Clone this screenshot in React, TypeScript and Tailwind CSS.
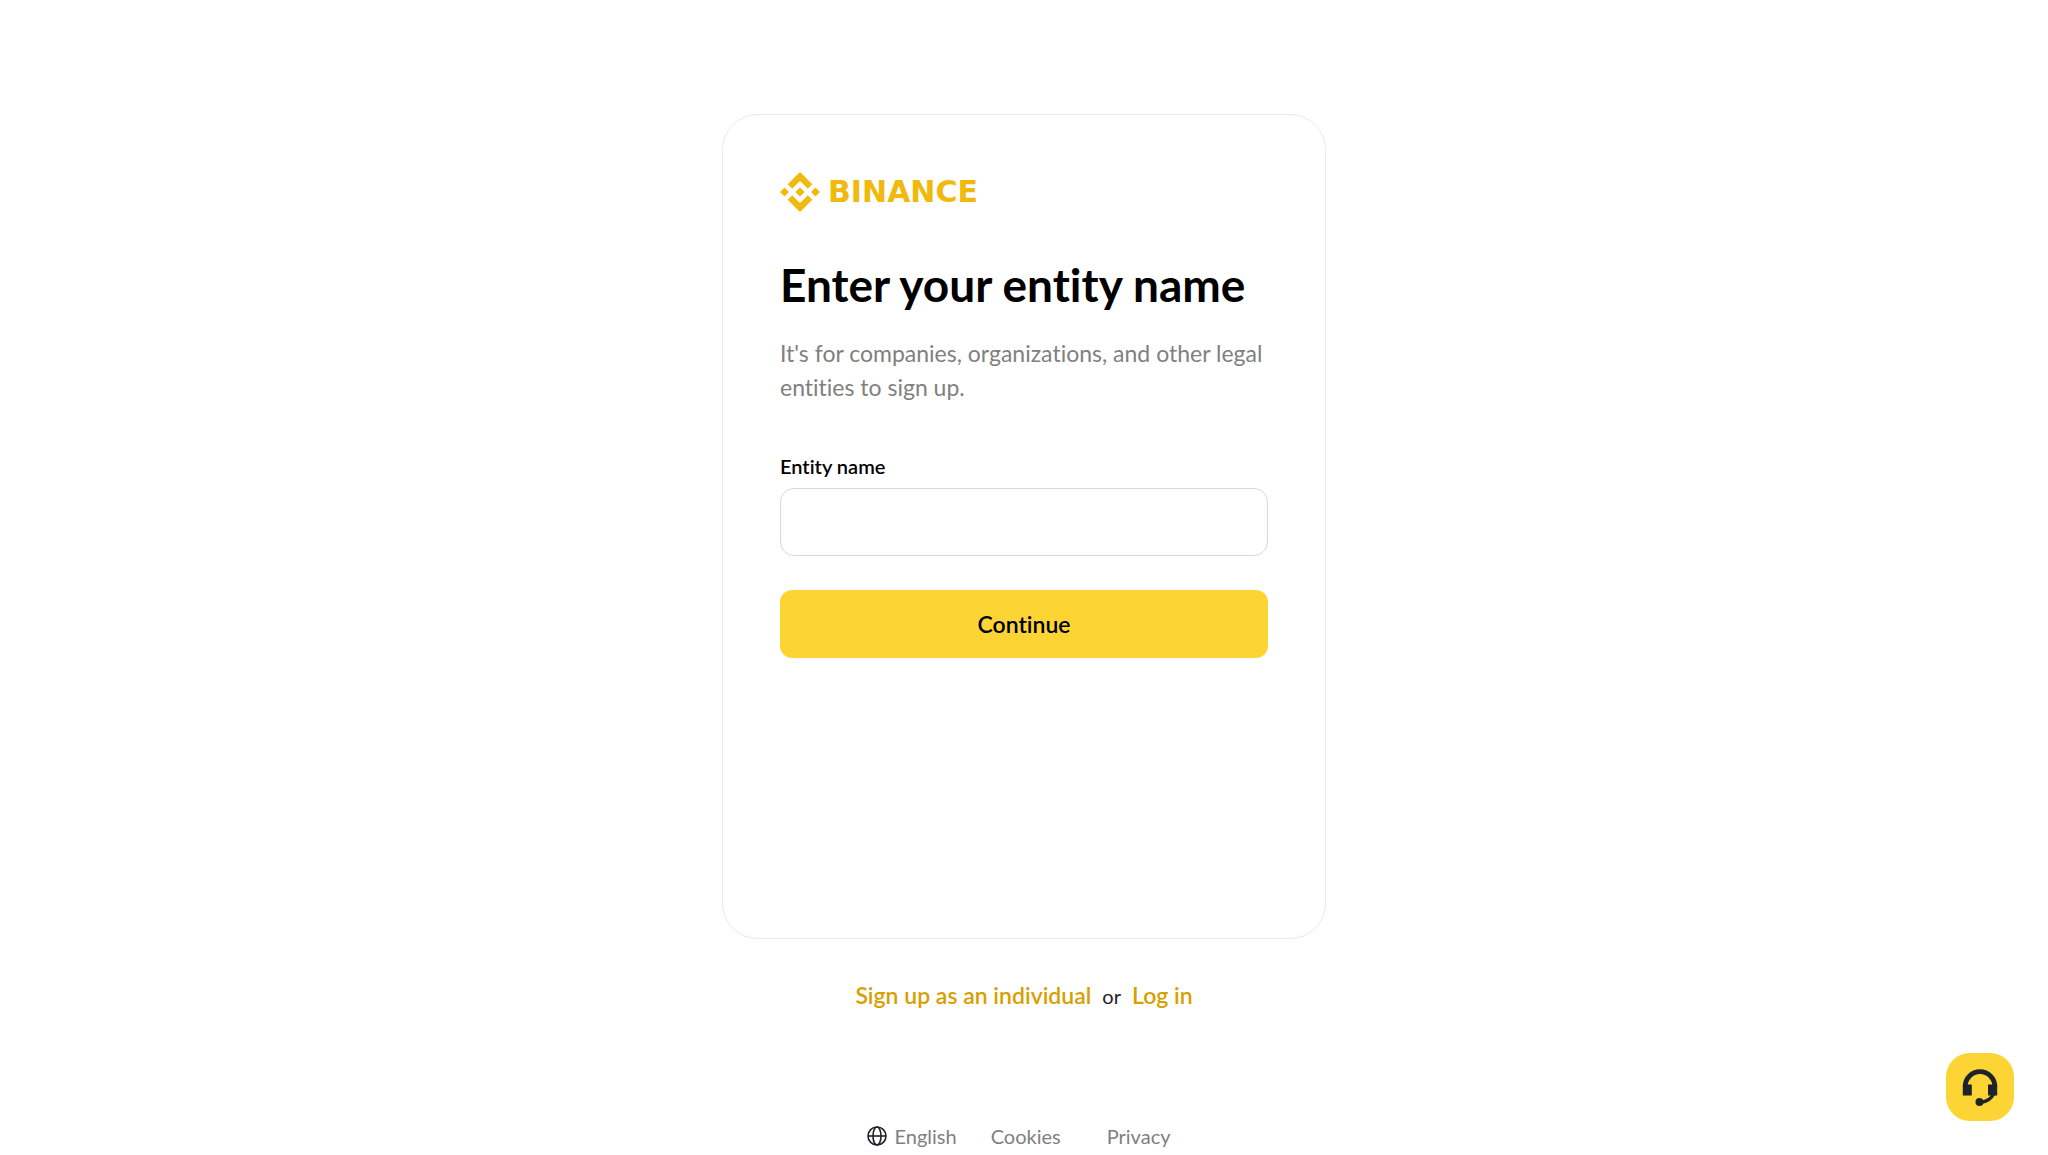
import { useState } from "react";

function BinanceMark() {
  return (
    <svg viewBox="0 0 126.61 126.61" className="size-10 fill-[#f0b90b]" aria-hidden="true">
      <path d="M38.73 53.2l24.59-24.58 24.6 24.6 14.3-14.31L63.32 0l-38.9 38.9zM0 63.31L14.3 49l14.31 14.31-14.31 14.3zM38.73 73.41l24.59 24.59 24.6-24.6 14.31 14.29-38.9 38.91-38.91-38.88zM98 63.31L112.3 49l14.31 14.3-14.31 14.32z" />
      <path d="M77.83 63.3L63.32 48.78 48.8 63.3l14.52 14.5z" />
    </svg>
  );
}

function GlobeIcon() {
  return (
    <svg viewBox="0 0 20 20" className="size-5" fill="none" stroke="#1e2329" strokeWidth="1.6" aria-hidden="true">
      <circle cx="10" cy="10" r="9" />
      <ellipse cx="10" cy="10" rx="4" ry="9" />
      <path d="M1 10h18" />
    </svg>
  );
}

function HeadsetIcon() {
  return (
    <svg viewBox="0 0 36 38" className="h-[38px] w-9" fill="none" aria-hidden="true">
      <path d="M3.2 18.5a14.8 14.8 0 0 1 29.6 0" stroke="#1e2329" strokeWidth="4.8" />
      <path d="M.8 16.5h9v11h-9zM26 16.5h9.2v11H26z" fill="#1e2329" />
      <path d="M31.5 26c-2 4.500-6.500 7.500-13 8.500" stroke="#1e2329" strokeWidth="3.2" />
      <circle cx="17.5" cy="34" r="4" fill="#1e2329" />
    </svg>
  );
}

export default function App() {
  const [entity, setEntity] = useState("");

  return (
    <div className="flex min-h-screen flex-col items-center bg-white px-4 pt-[114px] font-[Lato,sans-serif] text-black [font-variant-ligatures:none]">
      <main className="flex w-full max-w-[604px] flex-col items-center">
        <section className="min-h-[825px] w-full rounded-[36px] border border-[#eaeaea] p-[57px]">
          <a href="#" aria-label="Binance" className="flex h-10 w-fit items-center gap-2 text-[#f0b90b]">
            <BinanceMark />
            <span className="font-['DejaVu_Sans',sans-serif] text-[30px] leading-[42px] font-bold">BINANCE</span>
          </a>
          <h1 className="mt-[45px] text-[46px] leading-14 font-bold">Enter your entity name</h1>
          <p className="mt-[23px] text-[23px] leading-[34px] text-[#808080]">
            It's for companies, organizations, and other legal entities to sign up.
          </p>
          <form className="mt-12 flex flex-col" onSubmit={(e) => e.preventDefault()}>
            <label htmlFor="entity" className="text-[20px] leading-7 font-semibold">
              Entity name
            </label>
            <input
              id="entity"
              value={entity}
              onChange={(e) => setEntity(e.target.value)}
              className="mt-2 h-[68px] rounded-[14px] border border-[#d8d8d8] px-5 text-[20px] outline-none focus:border-[#f0b90b]"
            />
            <button type="submit" className="mt-[34px] h-[68px] rounded-[12px] bg-[#fcd535] text-[23px] font-semibold">
              Continue
            </button>
          </form>
        </section>
        <p className="mt-[38px] flex items-baseline gap-[11px] text-[20px] leading-9">
          <a href="#" className="text-[23px] font-semibold text-[#d89f00]">Sign up as an individual</a>
          <span className="text-[#1e2329]">or</span>
          <a href="#" className="text-[23px] font-semibold text-[#d89f00]">Log in</a>
        </p>
      </main>
      <footer className="mt-auto flex items-center pb-[5px] text-[20px] leading-7 text-[#808080]">
        <button type="button" className="flex items-center gap-[7px]">
          <GlobeIcon />
          English
        </button>
        <a href="#" className="ml-[34px]">Cookies</a>
        <a href="#" className="mr-[10px] ml-[46px]">Privacy</a>
      </footer>
      <button
        type="button"
        aria-label="Customer support"
        className="fixed right-[34px] bottom-[34px] flex size-[68px] items-center justify-center rounded-[24px] bg-[#fcd535]"
      >
        <HeadsetIcon />
      </button>
    </div>
  );
}
